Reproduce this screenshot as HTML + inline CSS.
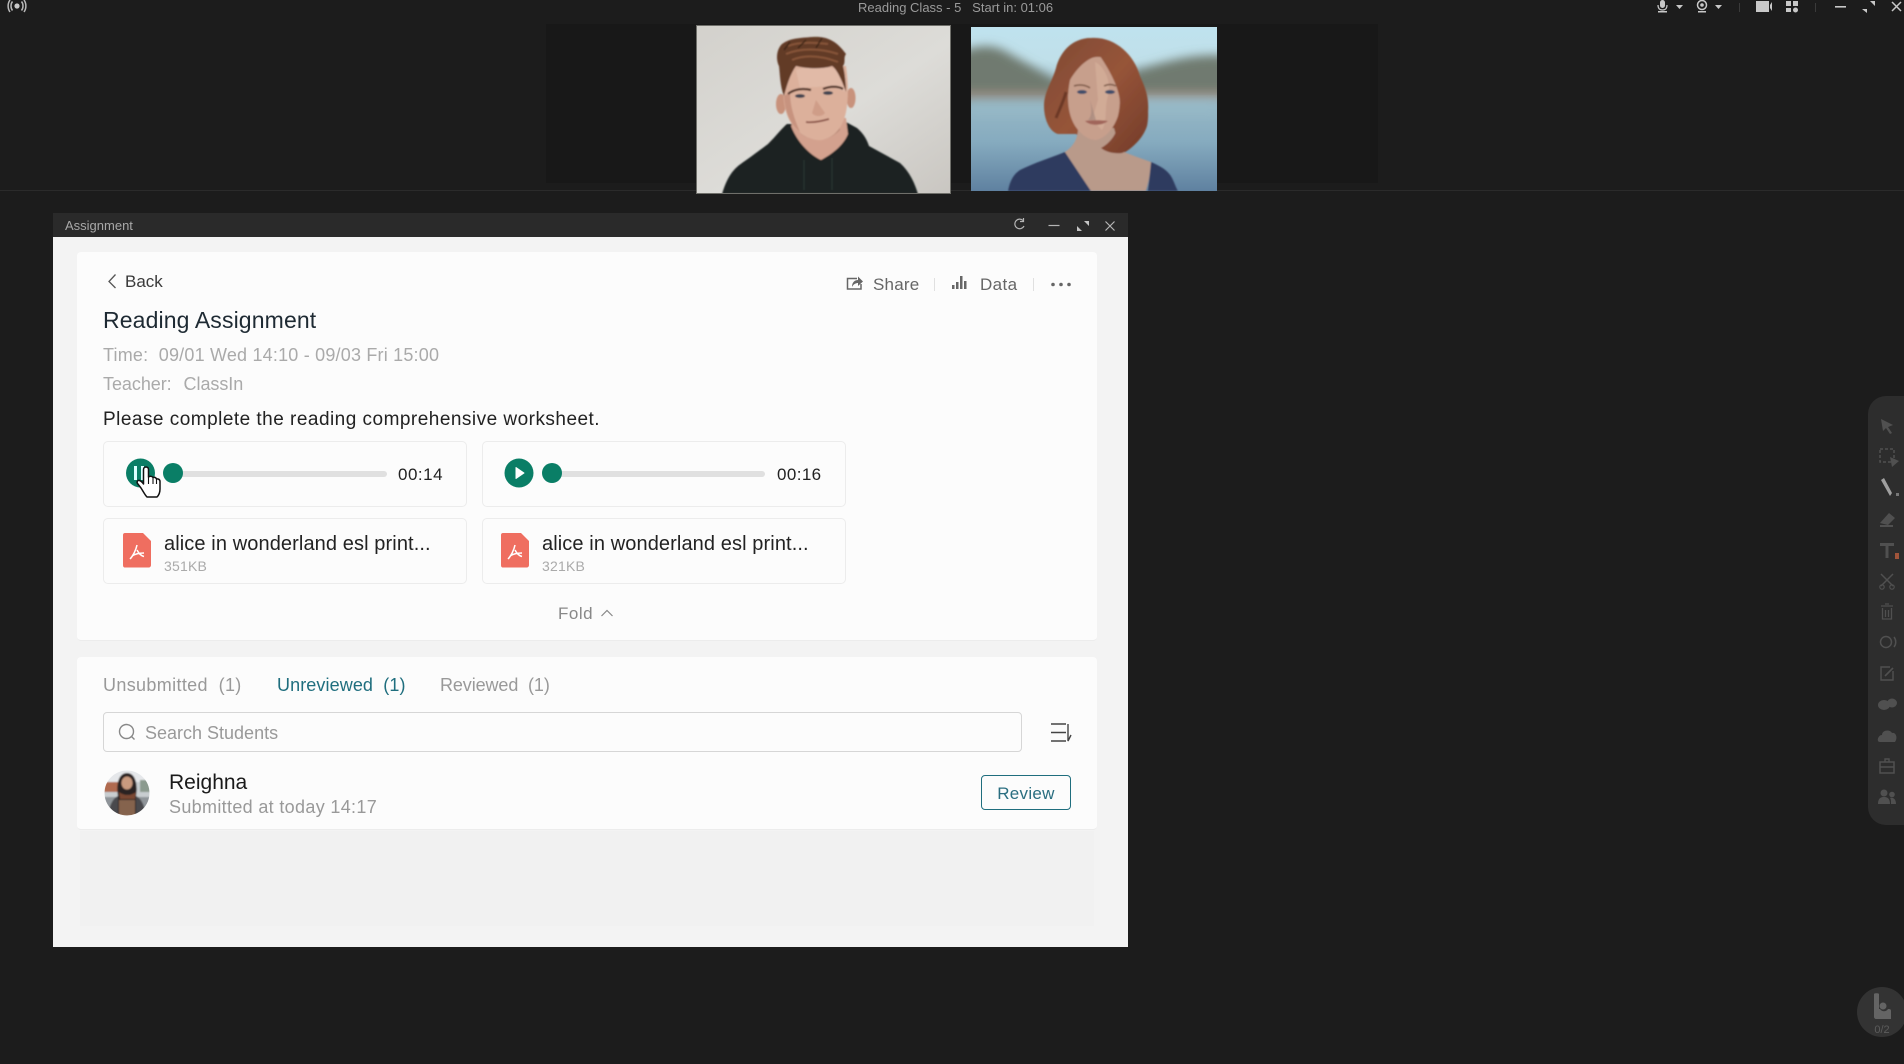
<!DOCTYPE html>
<html lang="en">
<head>
<meta charset="utf-8">
<title>Assignment</title>
<style>
html,body{margin:0;padding:0;width:1904px;height:1064px;overflow:hidden;background:#1c1c1c;font-family:"Liberation Sans","DejaVu Sans",sans-serif}
.a{position:absolute;box-sizing:border-box}
.t{position:absolute;white-space:nowrap;line-height:20px;height:20px}
svg{position:absolute;left:0;top:0}
</style>
</head>
<body>
<div class="a" style="left:546px;top:24px;width:832px;height:159px;background:#181818"></div>
<div class="a" style="left:0;top:190px;width:1904px;height:1px;background:#2b2b2b"></div>

<div class="t" style="left:858px;top:-2px;font-size:13px;color:#9a9a9a;letter-spacing:0">Reading Class - 5 &nbsp; Start in: 01:06</div>

<!-- window -->
<div class="a" style="left:53px;top:213px;width:1075px;height:734px;background:#f3f3f3"></div>
<div class="a" style="left:53px;top:213px;width:1075px;height:24px;background:#2a2a2a"></div>
<div class="t" style="left:65px;top:216px;font-size:13px;color:#a8a8a8">Assignment</div>

<div class="a" style="left:77px;top:252px;width:1020px;height:389px;background:#fcfcfc;border-radius:4px;border-bottom:1px solid #ececec"></div>
<div class="a" style="left:77px;top:657px;width:1020px;height:173px;background:#fcfcfc;border-radius:4px;border-bottom:1px solid #ececec"></div>
<div class="a" style="left:80px;top:831px;width:1014px;height:95px;background:#f1f1f1"></div>

<!-- header text -->
<div class="t" style="left:125px;top:272px;font-size:17px;color:#3a3a3a">Back</div>
<div class="t" style="left:873px;top:275px;font-size:17px;color:#666;letter-spacing:.2px">Share</div>
<div class="t" style="left:980px;top:275px;font-size:17px;color:#666;letter-spacing:.4px">Data</div>
<div class="t" style="left:103px;top:310px;font-size:23px;color:#1e2a33;letter-spacing:.13px">Reading Assignment</div>
<div class="t" style="left:103px;top:345px;font-size:18px;color:#aaa;letter-spacing:.2px">Time: &nbsp;09/01 Wed 14:10 - 09/03 Fri 15:00</div>
<div class="t" style="left:103px;top:374px;font-size:18px;color:#aaa;letter-spacing:-.05px;word-spacing:1px">Teacher: &nbsp;ClassIn</div>
<div class="t" style="left:103px;top:410px;font-size:19px;color:#222;letter-spacing:.48px">Please complete the reading comprehensive worksheet.</div>

<!-- audio & file cards -->
<div class="a" style="left:103px;top:441px;width:364px;height:66px;border:1px solid #ececec;border-radius:5px"></div>
<div class="a" style="left:482px;top:441px;width:364px;height:66px;border:1px solid #ececec;border-radius:5px"></div>
<div class="a" style="left:103px;top:518px;width:364px;height:66px;border:1px solid #ececec;border-radius:5px"></div>
<div class="a" style="left:482px;top:518px;width:364px;height:66px;border:1px solid #ececec;border-radius:5px"></div>
<div class="a" style="left:173px;top:471px;width:214px;height:6px;background:#e0e0e0;border-radius:3px"></div>
<div class="a" style="left:552px;top:471px;width:213px;height:6px;background:#e0e0e0;border-radius:3px"></div>
<div class="t" style="left:398px;top:465px;font-size:17px;color:#222;letter-spacing:.5px">00:14</div>
<div class="t" style="left:777px;top:465px;font-size:17px;color:#222;letter-spacing:.4px">00:16</div>
<div class="t" style="left:164px;top:534px;font-size:20px;color:#222;letter-spacing:.1px">alice in wonderland esl print...</div>
<div class="t" style="left:542px;top:534px;font-size:20px;color:#222;letter-spacing:.1px">alice in wonderland esl print...</div>
<div class="t" style="left:164px;top:556px;font-size:14px;color:#aaa;letter-spacing:.2px">351KB</div>
<div class="t" style="left:542px;top:556px;font-size:14px;color:#aaa;letter-spacing:.2px">321KB</div>
<div class="t" style="left:558px;top:604px;font-size:17px;color:#888;letter-spacing:.5px">Fold</div>

<!-- tabs -->
<div class="t" style="left:103px;top:675px;font-size:18px;color:#999;letter-spacing:.35px">Unsubmitted &nbsp;(1)</div>
<div class="t" style="left:277px;top:675px;font-size:18px;color:#1f6e7e;letter-spacing:.1px">Unreviewed &nbsp;(1)</div>
<div class="t" style="left:440px;top:675px;font-size:18px;color:#999;letter-spacing:-.1px">Reviewed &nbsp;(1)</div>
<div class="a" style="left:103px;top:712px;width:919px;height:40px;border:1px solid #d6d6d6;border-radius:4px"></div>
<div class="t" style="left:145px;top:723px;font-size:18px;color:#999">Search Students</div>
<div class="t" style="left:169px;top:773px;font-size:21px;color:#1a1a1a">Reighna</div>
<div class="t" style="left:169px;top:797px;font-size:18px;color:#999;letter-spacing:.33px">Submitted at today 14:17</div>
<div class="a" style="left:981px;top:775px;width:90px;height:35px;border:1.5px solid #1f6e7e;border-radius:4px;font-size:17px;line-height:35px;text-align:center;color:#2a6e80;letter-spacing:.3px">Review</div>

<svg width="1904" height="1064" viewBox="0 0 1904 1064" xmlns="http://www.w3.org/2000/svg">
<defs>
<filter id="b6" x="-30%" y="-30%" width="160%" height="160%"><feGaussianBlur stdDeviation="5"/></filter>
<filter id="b2" x="-5%" y="-5%" width="110%" height="110%"><feGaussianBlur stdDeviation=".9"/></filter>
<filter id="b1" x="-30%" y="-30%" width="160%" height="160%"><feGaussianBlur stdDeviation=".7"/></filter>
<linearGradient id="wall" x1="0" y1="0" x2="1" y2="1"><stop offset="0" stop-color="#d3d1cc"/><stop offset=".55" stop-color="#dddcd8"/><stop offset="1" stop-color="#c9c6c1"/></linearGradient>
<linearGradient id="lake" x1="0" y1="0" x2="0" y2="1"><stop offset="0" stop-color="#bfe2ee"/><stop offset=".2" stop-color="#c0e0ea"/><stop offset=".44" stop-color="#98b9c6"/><stop offset=".7" stop-color="#86abbf"/><stop offset="1" stop-color="#5f81a0"/></linearGradient>
<linearGradient id="hr" x1="0" y1="0" x2="1" y2="1"><stop offset="0" stop-color="#7f4a34"/><stop offset=".5" stop-color="#965439"/><stop offset="1" stop-color="#733b28"/></linearGradient>
<clipPath id="p1"><rect x="696" y="25" width="255" height="169"/></clipPath>
<clipPath id="p2"><rect x="971" y="27" width="246" height="164"/></clipPath>
<clipPath id="av"><circle cx="127" cy="793" r="22.5"/></clipPath>
</defs>

<!-- man -->
<g clip-path="url(#p1)">
<rect x="696" y="25" width="255" height="169" fill="url(#wall)"/>
<g filter="url(#b2)">
<path d="M722 194C727 178 732 170 742 163C752 156 760 150 768 144C776 136 782 128 787 124L795 124L846 122L857 128C864 134 867 140 869 146L900 163C910 172 915 184 918 194Z" fill="#1a2322"/>
<path d="M791 126C797 142 810 155 821 160C832 154 843 146 848 134L846 118L795 118Z" fill="#d3a18e"/>
<path d="M797 130C806 140 824 146 840 130L838 122L800 122Z" fill="#b98a78"/>
<path d="M804 160V190M832 158V190" stroke="#2b3533" stroke-width="1.2" fill="none"/>
<ellipse cx="781" cy="104" rx="5" ry="10" fill="#c8927c"/>
<ellipse cx="851" cy="98" rx="4.500" ry="10" fill="#c8927c"/>
<path d="M784 78C782 96 784 112 791 123C800 136 812 141 822 140C836 137 843 126 846 112C849 96 848 80 846 66L790 62Z" fill="#dcb09b"/>
<path d="M796 70C815 64 838 66 846 76L846 92L830 86L800 88Z" fill="#e3bfac" opacity=".7"/>
<path d="M784 96C785 112 790 124 800 132C794 118 790 106 790 92Z" fill="#bd8873" opacity=".7"/>
<path d="M788 94C794 89 803 88 811 90M823 89C830 86 838 86 843 89" stroke="#4f3328" stroke-width="2.200" fill="none"/>
<ellipse cx="800" cy="96" rx="5" ry="1.900" fill="#3f4350"/>
<ellipse cx="828" cy="93" rx="5" ry="1.900" fill="#3f4350"/>
<path d="M816 100L812 113C815 117 822 117 825 113Z" fill="#cf9d88"/>
<path d="M806 122C813 123 822 121 829 119" stroke="#8a5247" stroke-width="1.800" fill="none"/>
<path d="M779 66C776 60 776 50 782 44C790 38 800 38 812 37C826 36 836 40 846 54C843 58 846 62 843 66C845 74 846 84 846 92C842 80 836 68 832 66C820 70 804 68 796 66C790 74 786 88 784 96C780 86 780 74 779 66Z" fill="#623a28"/>
<path d="M788 46C798 42 812 42 828 44M786 54C800 48 820 48 838 54M792 60C806 54 822 56 838 62" stroke="#875539" stroke-width="2" fill="none"/>
<path d="M790 42L784 50M806 40L798 48M822 38L816 48" stroke="#3e2519" stroke-width="1.500" fill="none"/>
</g>
<rect x="696.500" y="25.500" width="254" height="168" fill="none" stroke="#6f6f6a" stroke-width="1"/>
</g>

<!-- woman -->
<g clip-path="url(#p2)">
<rect x="970" y="27" width="247" height="164" fill="url(#lake)"/>
<g filter="url(#b6)">
<path d="M960 52C980 44 995 44 1010 54L1060 82L1070 100L960 100Z" fill="#6f7a70"/>
<path d="M1130 72C1160 64 1190 52 1230 56V98H1130Z" fill="#6f7a70"/>
<path d="M960 92H1070V98H960ZM1130 92H1230V98H1130Z" fill="#9e8f85"/>
</g>
<path d="M970 100H1217V116H970Z" fill="#98bbc9" opacity=".5" filter="url(#b6)"/>
<g filter="url(#b2)">
<!-- hair back -->
<path d="M1091 38C1072 38 1060 52 1056 68C1052 82 1044 92 1044 106C1044 120 1050 132 1058 134L1076 134L1110 158C1124 156 1142 142 1147 126C1150 112 1147 92 1140 76C1134 54 1114 36 1091 38Z" fill="url(#hr)"/>
<!-- chest -->
<path d="M1008 191C1010 180 1014 174 1020 170C1034 163 1050 158 1065 152L1091 191ZM1148 191L1151 162C1160 166 1168 170 1172 178C1175 184 1176 188 1178 191Z" fill="#2e3a5e"/>
<path d="M1065 152L1091 191H1146C1150 178 1150 170 1151 162C1140 158 1128 154 1120 150L1114 128L1078 128C1078 138 1074 146 1065 152Z" fill="#b99a8a"/>
<!-- face -->
<path d="M1069 84C1067 98 1068 110 1072 120C1076 130 1086 140 1096 140C1106 138 1114 128 1118 116C1122 100 1120 76 1110 62C1102 54 1090 56 1082 64C1074 70 1070 76 1069 84Z" fill="#c79f8c"/>
<path d="M1095 62C1104 66 1112 82 1108 96C1104 108 1108 120 1102 130L1092 120L1098 100Z" fill="#dcb7a0" opacity=".5"/>
<path d="M1090 100C1092 110 1092 116 1088 120L1096 120Z" fill="#9c847a" opacity=".6"/>
<path d="M1074 86C1079 84 1086 85 1090 88M1104 86C1108 84 1112 84 1116 86" stroke="#7b5846" stroke-width="1.500" fill="none"/>
<ellipse cx="1082" cy="92" rx="5" ry="2" fill="#414e6a"/>
<ellipse cx="1110" cy="92" rx="5" ry="2" fill="#414e6a"/>
<path d="M1085 121C1090 120 1102 120 1108 121C1102 126 1090 126 1085 121Z" fill="#a0655a"/>
<!-- side hair -->
<path d="M1091 38C1106 38 1118 44 1128 58C1140 74 1150 92 1148 112C1146 130 1136 148 1122 153C1114 154 1106 152 1101 148C1112 142 1120 130 1119 114C1124 96 1112 74 1100 56C1090 56 1078 66 1070 80C1068 90 1068 98 1067 106C1070 116 1074 126 1073 133C1064 135 1056 134 1052 128C1046 120 1044 110 1046 100C1052 88 1056 76 1058 66C1064 50 1076 38 1091 38Z" fill="url(#hr)"/>
<path d="M1056 118C1060 108 1064 100 1066 92" stroke="#53291b" stroke-width="3" fill="none" opacity=".6"/>
</g>
</g>

<!-- broadcast icon -->
<g fill="none" stroke="#b8b8b8" stroke-width="1.5">
<circle cx="17" cy="6" r="2.6" fill="#c8c8c8" stroke="none"/>
<path d="M12.500 1.500C10.500 4 10.500 8 12.500 10.500M21.500 1.500C23.500 4 23.500 8 21.500 10.500"/>
<path d="M10 0C7.500 3.500 7.500 8.500 10 12M24 0C26.500 3.500 26.500 8.500 24 12"/>
</g>

<!-- top-right controls -->
<g fill="#c8c8c8">
<rect x="1660" y="0" width="5" height="8" rx="2.500"/>
<path d="M1658 5C1658 9 1660 10 1662.500 10C1665 10 1667 9 1667 5" fill="none" stroke="#c8c8c8" stroke-width="1.200"/>
<rect x="1658" y="11" width="9" height="1.500"/>
<path d="M1676 5H1683L1679.500 9Z"/>
<circle cx="1702" cy="5" r="4.500" fill="none" stroke="#c8c8c8" stroke-width="1.500"/>
<circle cx="1702" cy="5" r="1.800"/>
<rect x="1698" y="11" width="8" height="1.500"/>
<path d="M1715 5H1722L1718.500 9Z"/>
<rect x="1739" y="3" width="1" height="9" fill="#3a3a3a"/>
<rect x="1756" y="1" width="13" height="11"/>
<path d="M1770 5L1772 2V11L1770 8Z"/>
<rect x="1786" y="1" width="5" height="5"/><rect x="1793" y="1" width="5" height="5"/><rect x="1786" y="8" width="5" height="4"/><circle cx="1795.500" cy="10" r="2.500"/>
<rect x="1815" y="3" width="1" height="9" fill="#3a3a3a"/>
<rect x="1835" y="6" width="11" height="1.600"/>
<path d="M1870 1H1875V6ZM1862 9H1867V13Z"/>
<path d="M1892 2L1901 11M1901 2L1892 11" stroke="#c8c8c8" stroke-width="1.500" fill="none"/>
</g>

<!-- window controls -->
<g fill="none" stroke="#b5b5b5" stroke-width="1.200">
<path d="M1023 220.500A4.800 4.800 0 1 0 1024 226"/>
<path d="M1023.500 218V221.500H1020"/>
<path d="M1048.500 225.500H1059.500"/>
<path d="M1105.500 221.500L1114.500 230.500M1114.500 221.500L1105.500 230.500"/>
</g>
<path d="M1084 221H1089V226ZM1077 226L1082 231H1077Z" fill="#c4c4c4"/>

<!-- back chevron -->
<path d="M115.500 274.500L109 281.500L115.500 288" fill="none" stroke="#555" stroke-width="1.300"/>

<!-- share -->
<path d="M857 278.500H847.500V289H861V284" fill="none" stroke="#666" stroke-width="1.500"/>
<path d="M852 287C852 282 855 280 858 280V276.500L863 281.500L858 286V283C856 283 853.500 284 852 287Z" fill="#666"/>
<rect x="934" y="278" width="1" height="13" fill="#e0e0e0"/>
<path d="M952 285h2.500v4H952zM956 282h2.500v7H956zM960 276h2.500v13H960zM964 281h2.500v8H964z" fill="#666"/>
<rect x="1033" y="278" width="1" height="13" fill="#e0e0e0"/>
<circle cx="1053" cy="284.500" r="1.800" fill="#666"/><circle cx="1061" cy="284.500" r="1.800" fill="#666"/><circle cx="1069" cy="284.500" r="1.800" fill="#666"/>

<!-- players -->
<circle cx="140.500" cy="473" r="14.500" fill="#0a7e66"/>
<rect x="134" y="466" width="3" height="14" fill="#dff"/>
<rect x="141" y="466" width="3" height="14" fill="#dff"/>
<circle cx="173" cy="473" r="10" fill="#0a7e66"/>
<circle cx="519" cy="473" r="14.500" fill="#0a7e66"/>
<path d="M516 467.500V478.500L524 473Z" fill="#fff" stroke="#fff" stroke-width="1" stroke-linejoin="round"/>
<circle cx="552" cy="473" r="10" fill="#0a7e66"/>

<!-- pointer hand -->
<path d="M146 467C147.500 467 148.500 468 148.500 469.500V477C150 476 152 476 153 477.500C154.500 477 156 477.500 156.500 479C158 478.500 160 479.500 160 481.500V489C160 493 159 495 157 497H147C145 495 143 491 141 488L137.500 483.500C136.500 482 137.500 480 139.500 480.500C141 481 142.500 482.500 143.500 484V469.500C143.500 468 144.500 467 146 467Z" fill="#fff" stroke="#111" stroke-width="1.500" stroke-linejoin="round"/>
<path d="M148.500 477V484M153 477.500V484M156.500 479V484" stroke="#111" stroke-width="1.100" fill="none"/>

<!-- PDF icons -->
<g>
<path d="M125 533H143L151 541V565C151 566.500 150 567.500 148.500 567.500H125C123.500 567.500 123 566.500 123 565V535C123 534 123.500 533 125 533Z" fill="#ef6e60"/>
<path d="M137 545C136 550 133 556 130 559M137 550C139 554 142 556 144 556.500M132 556C135 554 140 553 144 553" fill="none" stroke="#fff" stroke-width="1.500"/>
</g>
<g>
<path d="M503 533H521L529 541V565C529 566.500 528 567.500 526.500 567.500H503C501.500 567.500 501 566.500 501 565V535C501 534 501.500 533 503 533Z" fill="#ef6e60"/>
<path d="M515 545C514 550 511 556 508 559M515 550C517 554 520 556 522 556.500M510 556C513 554 518 553 522 553" fill="none" stroke="#fff" stroke-width="1.500"/>
</g>

<!-- fold chevron -->
<path d="M601.500 616L607 610.500L612.500 616" fill="none" stroke="#888" stroke-width="1.200"/>

<!-- search icon -->
<circle cx="126.500" cy="731.500" r="7" fill="none" stroke="#888" stroke-width="1.400"/>
<path d="M131.500 736.500L134.500 739.500" stroke="#888" stroke-width="1.400"/>

<!-- sort icon -->
<path d="M1051 724H1066M1051 732.500H1066M1051 741H1066" stroke="#444" stroke-width="1.500"/>
<path d="M1068 724V741L1071 735" fill="none" stroke="#444" stroke-width="1.400"/>

<!-- avatar -->
<g clip-path="url(#av)">
<g filter="url(#b1)">
<rect x="104" y="770" width="46" height="46" fill="#c8cdd0"/>
<rect x="104" y="770" width="46" height="12" fill="#e5e7ea"/>
<rect x="104" y="782" width="14" height="10" fill="#b06a50"/>
<rect x="140" y="780" width="10" height="12" fill="#8b9a8e"/>
<rect x="104" y="797" width="46" height="19" fill="#8f9499"/>
<path d="M118 796C116 786 118 773 127 773C136 773 138 786 136 796C140 800 140 806 138 816H116C114 806 114 800 118 796Z" fill="#2c2421"/>
<ellipse cx="127" cy="783" rx="5.500" ry="6.500" fill="#c99a7f"/>
<path d="M119 792C124 796 131 796 136 792L135 799H120Z" fill="#7a4630"/>
<path d="M119 800H135V816H119Z" fill="#85634e"/>
<path d="M108 816C110 802 114 798 118 796L118 816ZM146 816C144 802 140 798 136 796L136 816Z" fill="#48494d"/>
</g>
</g>

<!-- right toolbar -->
<rect x="1868" y="396" width="60" height="429" rx="18" fill="#2d2d2d"/>
<g fill="#505050" stroke="none">
<path d="M1881 419L1893 425L1888 427L1892 433L1890 434L1886 428L1883 431Z"/>
<rect x="1880" y="449" width="14" height="13" fill="none" stroke="#505050" stroke-width="1.500" stroke-dasharray="3 2"/>
<path d="M1890 457L1899 461L1892 467Z"/>
<path d="M1881 480L1884 478L1892 493L1890 496Z" fill="#a0a0a0"/>
<rect x="1896" y="493" width="3" height="3" fill="#777"/>
<path d="M1880 523L1889 513L1895 518L1888 525ZM1880 525H1893V527H1880Z"/>
<path d="M1880 543H1894V546H1888.500V558H1885.500V546H1880Z"/>
<rect x="1895" y="553" width="4" height="6" fill="#a0543a"/>
<path d="M1881 574L1893 586M1893 574L1881 586" stroke="#505050" stroke-width="1.500"/>
<circle cx="1882" cy="587" r="2.200" fill="none" stroke="#505050" stroke-width="1.200"/><circle cx="1892" cy="587" r="2.200" fill="none" stroke="#505050" stroke-width="1.200"/>
<path d="M1881 606H1893M1885 604H1889M1882.500 608V619H1891.500V608M1885.500 610V617M1888.500 610V617" stroke="#505050" stroke-width="1.300" fill="none"/>
<circle cx="1886" cy="642" r="5.500" fill="none" stroke="#505050" stroke-width="1.500"/>
<path d="M1894 637A8 8 0 0 1 1894 647" stroke="#505050" stroke-width="1.500" fill="none"/>
<path d="M1890 667H1881V680H1893V671" stroke="#505050" stroke-width="1.400" fill="none"/>
<path d="M1885 676L1893 668" stroke="#505050" stroke-width="1.600"/>
<ellipse cx="1884" cy="705" rx="6" ry="5"/><ellipse cx="1892" cy="703" rx="5" ry="4.500"/>
<path d="M1880 742C1876 742 1878 735 1882 735C1882 730 1890 729 1892 733C1896 732 1898 738 1895 742Z"/>
<path d="M1880 762H1894V773H1880Z" fill="none" stroke="#505050" stroke-width="1.500"/>
<path d="M1885 762V759H1889V762M1880 767H1894" stroke="#505050" stroke-width="1.400" fill="none"/>
<circle cx="1884" cy="793" r="3.500"/><circle cx="1892" cy="794.500" r="2.800"/>
<path d="M1878 804C1878 798 1881 797 1884 797C1887 797 1890 798 1890 804ZM1891 804C1891 801 1891 799 1890 798C1893 797 1896 799 1896 804Z"/>
</g>

<!-- raise hand -->
<circle cx="1882" cy="1012" r="25" fill="#333"/>
<path d="M1874 994C1874 993 1879 993 1879 994V1009H1880C1882 1012 1886 1012 1888 1009C1891 1009 1891 1010 1891 1011V1019H1876C1875 1019 1874 1018 1874 1017Z" fill="#646464"/>
<circle cx="1883" cy="1006" r="3.500" fill="#646464"/>
<text x="1882" y="1033" text-anchor="middle" font-size="11" fill="#5c5c5c" font-family="Liberation Sans, sans-serif">0/2</text>
</svg>
</body>
</html>
